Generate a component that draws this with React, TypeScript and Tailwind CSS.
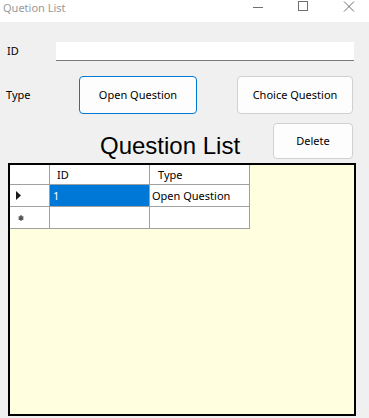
import React from "react"

const ui = { fontFamily: '"Noto Sans", "Open Sans", sans-serif' }

function TitleBar() {
    return (
        <div className="flex h-[22px] items-start bg-white">
            <span className="ml-[3px] text-[11px] leading-[15px] text-[#9a9a9a]">Quetion List</span>
            <div className="ml-auto flex items-start">
                <svg width="12" height="12" viewBox="0 0 12 12" className="mr-[33px] mt-[1px]">
                    <line x1="1" y1="6.5" x2="11" y2="6.5" stroke="#6f6f6f" strokeWidth="1" />
                </svg>
                <svg width="12" height="12" viewBox="0 0 12 12" className="mr-[34px] mt-[1px]">
                    <rect x="1.5" y="0.5" width="9" height="9" fill="none" stroke="#6f6f6f" strokeWidth="1" />
                </svg>
                <svg width="12" height="12" viewBox="0 0 12 12" className="mr-[14px] mt-[1px]">
                    <path d="M1 0.5 L11 10.5 M11 0.5 L1 10.5" stroke="#6f6f6f" strokeWidth="1" />
                </svg>
            </div>
        </div>
    )
}

function WinButton({ label, focused, className }: { label: string; focused?: boolean; className: string }) {
    return (
        <button
            className={`flex items-center justify-center rounded-[4px] border bg-[#fdfdfd] text-[11px] text-black ${
                focused ? "border-[#0078d4]" : "border-[#d0d0d0]"
            } ${className}`}
        >
            {label}
        </button>
    )
}

function QuestionGrid() {
    const line = "border-r border-b border-[#a0a0a0]"
    return (
        <div className="ml-[8px] mt-[4px] h-[253px] w-[348px] border-2 border-black bg-[#ffffe0] text-[11px]">
            <div className="flex h-[20px] w-[240px] bg-white">
                <div className={`w-[40px] ${line}`} />
                <div className={`w-[100px] pl-[7px] leading-[19px] ${line}`}>ID</div>
                <div className={`w-[100px] pl-[8px] leading-[19px] ${line}`}>Type</div>
            </div>
            <div className="flex h-[22px] w-[240px] bg-white">
                <div className={`flex w-[40px] items-center pl-[6px] ${line}`}>
                    <svg width="6" height="9" viewBox="0 0 6 9">
                        <path d="M0 0 L5 4.5 L0 9 Z" fill="#1a1a1a" />
                    </svg>
                </div>
                <div className={`w-[100px] bg-[#0078d7] pl-[3px] leading-[21px] text-white ${line}`}>1</div>
                <div className={`w-[100px] pl-[2px] leading-[21px] ${line}`}>Open Question</div>
            </div>
            <div className="flex h-[22px] w-[240px] bg-white">
                <div className={`flex w-[40px] items-center pl-[8px] ${line}`}>
                    <svg width="6" height="6" viewBox="0 0 6 6">
                        <path d="M3 0.3 V5.7 M0.6 1.6 L5.4 4.4 M5.4 1.6 L0.6 4.4" stroke="#555" strokeWidth="1.6" />
                    </svg>
                </div>
                <div className={`w-[100px] ${line}`} />
                <div className={`w-[100px] ${line}`} />
            </div>
        </div>
    )
}

export default function App() {
    return (
        <div className="h-[418px] w-[369px] overflow-hidden bg-[#f0f0f0]" style={ui}>
            <TitleBar />

            <div className="mt-[20px] flex h-[19px] items-center">
                <span className="w-[56px] pl-[7px] text-[11px]">ID</span>
                <div className="h-[19px] w-[298px] border-b border-[#7a7a7a] bg-white" />
            </div>

            <div className="mt-[15px] flex h-[38px] items-center">
                <span className="w-[79px] pl-[6px] text-[11px]">Type</span>
                <WinButton label="Open Question" focused className="h-[38px] w-[118px]" />
                <WinButton label="Choice Question" className="ml-[40px] h-[38px] w-[116px]" />
            </div>

            <div className="mt-[9px] flex h-[36px] items-end">
                <span
                    className="ml-[100px] text-[24px] leading-[27px] text-black"
                    style={{ fontFamily: '"Liberation Sans", Arial, sans-serif' }}
                >
                    Question List
                </span>
                <WinButton label="Delete" className="ml-auto mr-[16px] h-[36px] w-[80px]" />
            </div>

            <QuestionGrid />
        </div>
    )
}
